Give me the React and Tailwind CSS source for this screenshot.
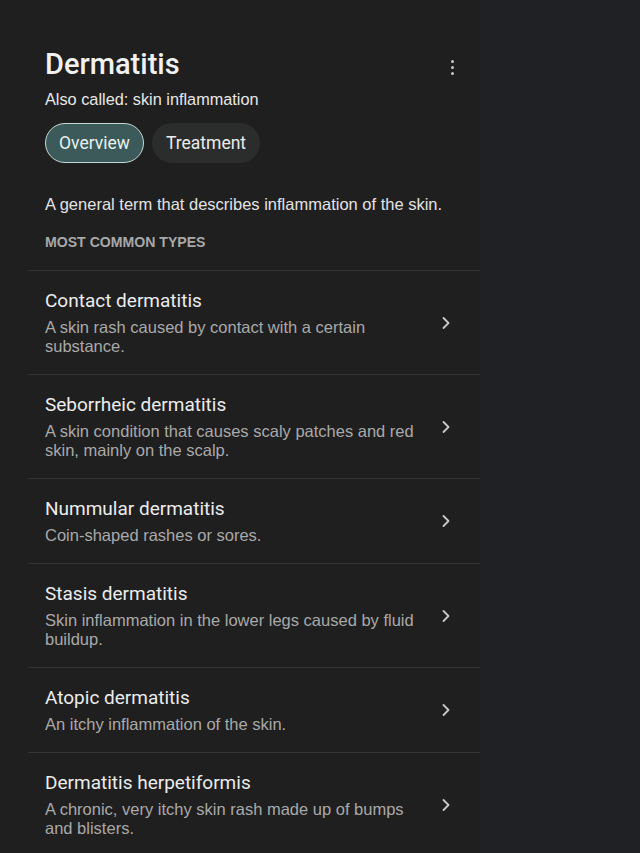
import { ChevronRight } from 'lucide-react'

const types = [
    { name: 'Contact dermatitis', desc: 'A skin rash caused by contact with a certain substance.' },
    { name: 'Seborrheic dermatitis', desc: 'A skin condition that causes scaly patches and red skin, mainly on the scalp.' },
    { name: 'Nummular dermatitis', desc: 'Coin-shaped rashes or sores.' },
    { name: 'Stasis dermatitis', desc: 'Skin inflammation in the lower legs caused by fluid buildup.' },
    { name: 'Atopic dermatitis', desc: 'An itchy inflammation of the skin.' },
    { name: 'Dermatitis herpetiformis', desc: 'A chronic, very itchy skin rash made up of bumps and blisters.' },
]

const App = () => {
    return (
        <div className="min-h-[853px] bg-[#202124] flex font-['Roboto',sans-serif]">
            <div className="w-[480px] bg-[#1f1f1f] pt-[46px]">
                {/* Header */}
                <div className="pl-[45px] pr-[20px]">
                    <div className="flex items-start justify-between">
                        <h1 className="text-[29px] leading-[36px] text-[#f1f1f1] font-medium">Dermatitis</h1>
                        <div className="flex flex-col gap-[3px] mt-[14px] mr-[6px]">
                            <span className="w-[3px] h-[3px] rounded-full bg-[#c4c7c5]" />
                            <span className="w-[3px] h-[3px] rounded-full bg-[#c4c7c5]" />
                            <span className="w-[3px] h-[3px] rounded-full bg-[#c4c7c5]" />
                        </div>
                    </div>
                    <p className="mt-[7px] text-[16.3px] leading-[20px] text-[#e8e8e8] font-['Liberation_Sans',sans-serif]">
                        Also called: skin inflammation
                    </p>
                    <div className="flex gap-[8px] mt-[14px]">
                        <button className="h-[40px] px-[13px] rounded-full border-[1.5px] border-[#c5d8d5] bg-[#3b5a59] text-[17.5px] text-[#e6f1ef]">
                            Overview
                        </button>
                        <button className="h-[40px] px-[14px] rounded-full bg-[#2b2c2c] text-[17.5px] text-[#ececec]">
                            Treatment
                        </button>
                    </div>
                    <p className="mt-[31px] text-[16.5px] leading-[20px] text-[#e3e3e3] font-['Liberation_Sans',sans-serif]">
                        A general term that describes inflammation of the skin.
                    </p>
                    <p className="mt-[19px] text-[14.1px] leading-[18px] font-bold text-[#a8a8a8] font-['Liberation_Sans',sans-serif]">
                        MOST COMMON TYPES
                    </p>
                </div>

                {/* List */}
                <div className="ml-[28px] mt-[19px]">
                    {types.map((t) => (
                        <div key={t.name} className="flex items-center border-t border-[#343434] pl-[17px] pr-[24px] pt-[18px] pb-[18px]">
                            <div className="flex-1 pr-[18px]">
                                <p className="text-[19px] leading-[24px] text-[#ececec]">{t.name}</p>
                                <p className="mt-[5px] text-[16.5px] leading-[19px] text-[#a9a9a9] font-['Liberation_Sans',sans-serif]">
                                    {t.desc}
                                </p>
                            </div>
                            <ChevronRight size={20} strokeWidth={2.2} className="text-[#c8c8c8]" />
                        </div>
                    ))}
                </div>
            </div>
        </div>
    )
}

export default App
